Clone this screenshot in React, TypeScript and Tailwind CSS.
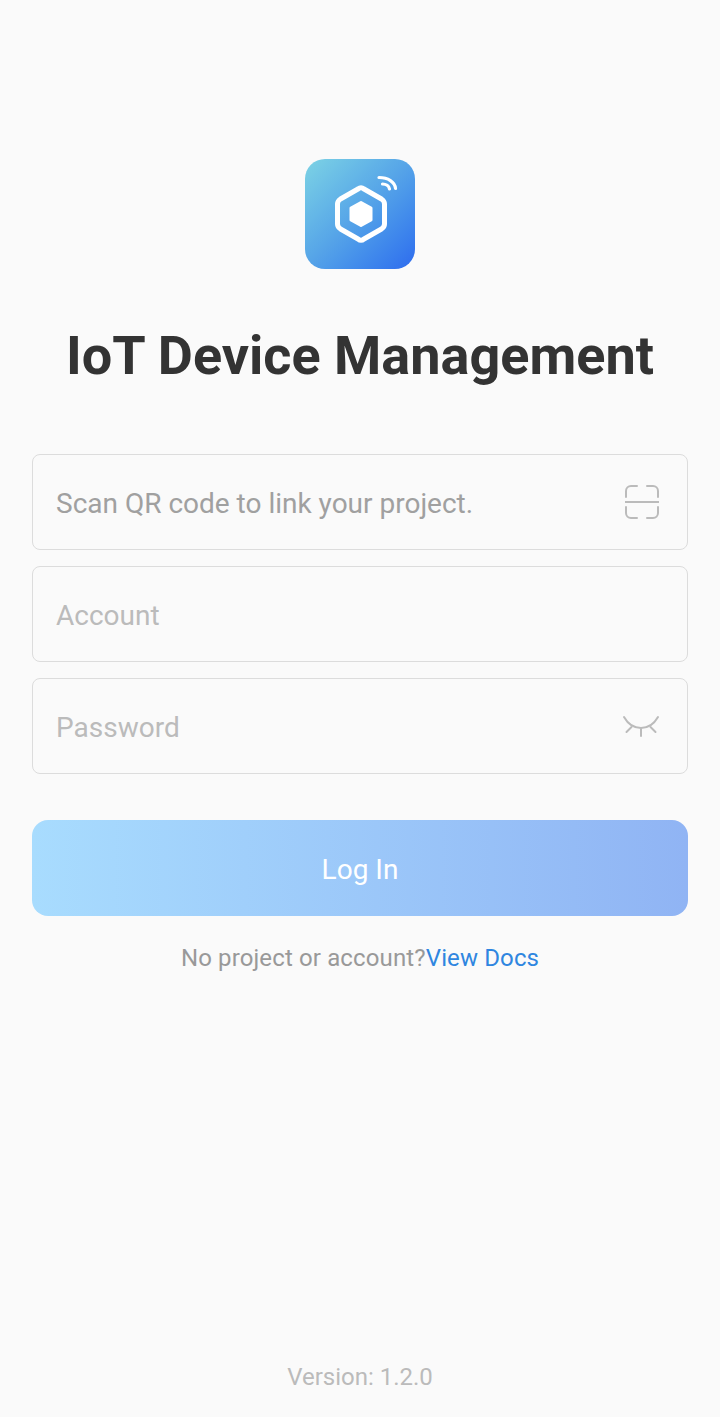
function Logo() {
  return (
    <div className="h-[110px] w-[110px] rounded-[20px] bg-gradient-to-br from-[#7dd3e4] via-[#55a3e8] to-[#2f6bee]">
      <svg viewBox="0 0 110 110" className="h-[110px] w-[110px]" fill="none" stroke="#fff" strokeLinecap="round" strokeLinejoin="round">
        <path
          d="M53 30 Q56 27.500 59 30 L76.500 40 Q79.500 42 79.500 45 V65 Q79.500 68 76.500 70 L59 80 Q56 82.500 53 80 L35.500 70 Q32.500 68 32.500 65 V45 Q32.500 42 35.500 40 Z"
          strokeWidth="5"
        />
        <path d="M56 43.500 L66 49 V61 L56 66.500 L46 61 V49 Z" fill="#fff" strokeWidth="3" />
        <path d="M74 18.500 C83 18.500 90 23 90.500 29.500" strokeWidth="3.200" />
        <path d="M77.500 25 C81 25 84 27 84.500 30" strokeWidth="3.200" />
      </svg>
    </div>
  );
}

function ScanIcon() {
  return (
    <svg viewBox="0 0 34 34" className="h-[34px] w-[34px]" fill="none" stroke="#bbbbbb" strokeWidth="2" strokeLinecap="round">
      <path d="M12 1H6a5 5 0 0 0-5 5v6" />
      <path d="M22 1h6a5 5 0 0 1 5 5v6" />
      <path d="M0 17h34" />
      <path d="M1 22v6a5 5 0 0 0 5 5h6" />
      <path d="M33 22v6a5 5 0 0 1-5 5h-6" />
    </svg>
  );
}

function EyeOffIcon() {
  return (
    <svg viewBox="0 0 36 24" className="h-6 w-9" fill="none" stroke="#bbbbbb" strokeWidth="2" strokeLinecap="round">
      <path d="M1 3c4 7 10 11 17 11s13-4 17-11" />
      <path d="M8.500 13l-5 5" />
      <path d="M18 15v7" />
      <path d="M27.500 13l5 5" />
    </svg>
  );
}

function Field({ placeholder, dark, icon }: { placeholder: string; dark?: boolean; icon?: React.ReactNode }) {
  return (
    <div className="flex h-24 items-center rounded-lg border border-[#dcdcdc] pl-[23px] pr-[28px]">
      <input
        placeholder={placeholder}
        className={`min-w-0 flex-1 bg-transparent pt-[3px] text-[28px] outline-none ${dark ? 'placeholder:text-[#a0a0a0]' : 'placeholder:text-[#bbbbbb]'}`}
      />
      {icon}
    </div>
  );
}

export default function App() {
  return (
    <div className="flex min-h-[1417px] flex-col items-center bg-[#fafafa] font-['Roboto',sans-serif]">
      <div className="mt-[159px]">
        <Logo />
      </div>
      <h1 className="mt-[52px] text-[54px] leading-[70px] font-bold text-[#333333]">IoT Device Management</h1>

      <div className="mt-[63px] flex w-full flex-col gap-4 px-8">
        <Field placeholder="Scan QR code to link your project." dark icon={<ScanIcon />} />
        <Field placeholder="Account" />
        <Field placeholder="Password" icon={<EyeOffIcon />} />
      </div>

      <div className="mt-[46px] w-full px-8">
        <button className="h-24 w-full rounded-2xl bg-gradient-to-r from-[#a8dcfe] to-[#90b4f4] pt-1 text-[28px] text-white">
          Log In
        </button>
      </div>

      <p className="mt-6 text-2xl leading-[36px] tracking-[0.13px] text-[#999999]">
        No project or account?<span className="text-[#2f86e0]">View Docs</span>
      </p>

      <p className="mt-auto mb-[22px] text-2xl leading-[36px] text-[#bbbbbb]">Version: 1.2.0</p>
    </div>
  );
}
